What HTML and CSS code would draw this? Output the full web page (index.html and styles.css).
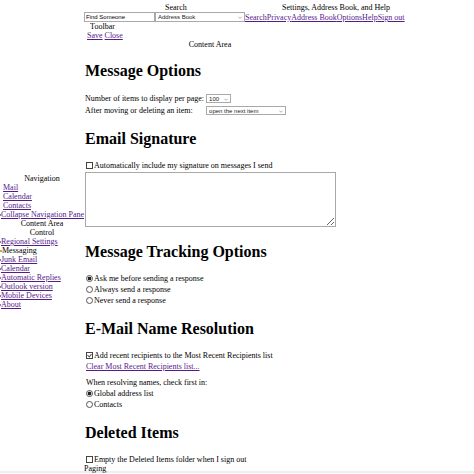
FILE: index.html
```html
<!DOCTYPE html>
<html lang="en">
<head>
    <meta charset="UTF-8">
    <title>Options</title>
    <link rel="stylesheet" href="styles.css">
</head>
<body>
    <div class="page">
        <div class="nav">
            <div class="caption">Navigation</div>
            <a href="#"><span class="ico"></span>Mail</a>
            <a href="#"><span class="ico"></span>Calendar</a>
            <a href="#"><span class="ico"></span>Contacts</a>
            <a href="#"><span class="dot"></span>Collapse Navigation Pane</a>
            <div class="caption">Content Area</div>
            <div class="caption">Control</div>
            <a href="#"><span class="dot"></span>Regional Settings</a>
            <div class="current"><span class="dot yellow"></span>Messaging</div>
            <a href="#"><span class="dot"></span>Junk Email</a>
            <a href="#"><span class="dot"></span>Calendar</a>
            <a href="#"><span class="dot"></span>Automatic Replies</a>
            <a href="#"><span class="dot"></span>Outlook version</a>
            <a href="#"><span class="dot"></span>Mobile Devices</a>
            <a href="#"><span class="dot"></span>About</a>
        </div>

        <div class="main">
            <div class="header">
                <div class="search-box">
                    <div class="search-title">Search</div>
                    <div class="search-row">
                        <input type="text" class="find" value="Find Someone">
                        <span class="sel book"><select><option>Address Book</option></select><svg viewBox="0 0 5 3"><path d="M0.5 0.5 L2.5 2.5 L4.5 0.5"/></svg></span>
                    </div>
                </div>
                <div class="help-box">
                    <div class="help-title">Settings, Address Book, and Help</div>
                    <div class="help-links"><a href="#">Search</a><a href="#">Privacy</a><a href="#">Address Book</a><a href="#">Options</a><a href="#">Help</a><a href="#">Sign out</a></div>
                </div>
            </div>

            <div class="toolbar">
                <div class="toolbar-title">Toolbar</div>
                <div><a href="#"><span class="ico"></span>Save</a> <a href="#">Close</a></div>
            </div>

            <div class="content-title">Content Area</div>

            <h1 class="first">Message Options</h1>
            <table class="opts">
                <tr>
                    <td>Number of items to display per page:</td>
                    <td><span class="sel small"><select><option>100</option></select><svg viewBox="0 0 5 3"><path d="M0.5 0.5 L2.5 2.5 L4.5 0.5"/></svg></span></td>
                </tr>
                <tr>
                    <td>After moving or deleting an item:</td>
                    <td><span class="sel wide"><select><option>open the next item</option></select><svg viewBox="0 0 5 3"><path d="M0.5 0.5 L2.5 2.5 L4.5 0.5"/></svg></span></td>
                </tr>
            </table>

            <h1>Email Signature</h1>
            <div class="line"><input type="checkbox" class="chk">Automatically include my signature on messages I send</div>
            <textarea class="sig"></textarea>

            <h1 class="tracking">Message Tracking Options</h1>
            <div class="line"><input type="radio" name="track" class="rad" checked>Ask me before sending a response</div>
            <div class="line"><input type="radio" name="track" class="rad">Always send a response</div>
            <div class="line"><input type="radio" name="track" class="rad">Never send a response</div>

            <h1>E-Mail Name Resolution</h1>
            <div class="line"><input type="checkbox" class="chk" checked>Add recent recipients to the Most Recent Recipients list</div>
            <div class="line"><a href="#">Clear Most Recent Recipients list...</a></div>
            <div class="line resolve">When resolving names, check first in:</div>
            <div class="line"><input type="radio" name="res" class="rad" checked>Global address list</div>
            <div class="line"><input type="radio" name="res" class="rad">Contacts</div>

            <h1>Deleted Items</h1>
            <div class="line"><input type="checkbox" class="chk">Empty the Deleted Items folder when I sign out</div>
        </div>
    </div>
    <div class="paging">Paging</div>
</body>
</html>
```

FILE: styles.css
```css
body{
  margin: 0;
  font-family: "Liberation Serif", "Times New Roman", serif;
  font-size: 8px;
  color: #000;
}
a{
  color: #551a8b;
}
.page{
  display: flex;
}

/* left navigation */
.nav{
  width: 84px;
  flex: none;
  padding-top: 174px;
  display: flex;
  flex-direction: column;
  line-height: 9px;
}
.nav a, .nav .current{
  white-space: nowrap;
}
.caption{
  text-align: center;
}
.ico{
  display: inline-block;
  width: 3px;
}
.dot{
  display: inline-block;
  width: 1px;
  height: 2px;
  background: #8a7ab8;
  vertical-align: middle;
}
.dot.yellow{
  background: #c9a640;
  width: 2px;
}

/* main column */
.main{
  width: 320px;
  flex: none;
}
.header{
  display: flex;
}
.search-box{
  width: 161px;
}
.search-title{
  padding-left: 81px;
  height: 11px;
  line-height: 11px;
  padding-top: 2px;
}
.search-row{
  display: flex;
  height: 10px;
  margin-top: -1px;
}
.find{
  width: 71px;
  height: 10px;
  box-sizing: border-box;
  margin: 0;
  padding: 0 1px;
  border: 1px solid #a9a9a9;
  font-family: "Liberation Sans", Arial, sans-serif;
  font-size: 6px;
}
.help-box{
  width: 159px;
}
.help-title{
  padding-left: 37px;
  height: 11px;
  line-height: 11px;
  padding-top: 2px;
}
.help-links{
  line-height: 9px;
  white-space: nowrap;
}

/* selects with a small chevron */
.sel{
  position: relative;
  display: inline-block;
  height: 10px;
  vertical-align: middle;
}
.sel select{
  appearance: none;
  display: block;
  width: 100%;
  height: 10px;
  box-sizing: border-box;
  margin: 0;
  padding: 0 0 0 2px;
  border: 1px solid #a9a9a9;
  border-radius: 0;
  font-family: "Liberation Sans", Arial, sans-serif;
  font-size: 6px;
  line-height: 8px;
  color: #222;
  background: #fff;
}
.sel svg{
  position: absolute;
  right: 3px;
  top: 4px;
  width: 4px;
  height: 3px;
  fill: none;
  stroke: #777;
  stroke-width: 0.7;
  pointer-events: none;
}
.book{
  width: 90px;
}
.small{
  width: 25px;
  height: 9px;
}
.small select{
  height: 9px;
}
.wide{
  width: 80px;
  height: 9px;
}
.wide select{
  height: 9px;
}

.toolbar{
  line-height: 9px;
}
.toolbar-title{
  width: 37px;
  text-align: center;
}
.content-title{
  text-align: center;
  width: 252px;
  line-height: 9px;
}

h1{
  font-size: 16px;
  line-height: 18px;
  margin: 13.5px 0 12.5px 1px;
}
h1.first{
  margin-top: 12.5px;
}
.opts{
  border-spacing: 0;
}
.opts td{
  padding: 1px 1px;
  height: 10px;
}
.line{
  line-height: 11px;
  white-space: nowrap;
  padding-left: 2px;
}
.chk, .rad{
  appearance: none;
  width: 7px;
  height: 7px;
  box-sizing: border-box;
  margin: 0 1px 0 0;
  vertical-align: -1px;
  border: 1px solid #444;
  background: #fff;
}
.chk{
  border-radius: 0;
  position: relative;
}
.chk:checked::after{
  content: "";
  position: absolute;
  left: 1px;
  top: 0px;
  width: 2px;
  height: 3px;
  border: solid #555;
  border-width: 0 1px 1px 0;
  transform: rotate(40deg);
}
.rad{
  border-radius: 50%;
  border-color: #555;
}
.rad:checked{
  background: radial-gradient(circle, #222 0, #222 1.6px, #fff 2.2px);
}
.sig{
  display: block;
  width: 251px;
  height: 55px;
  box-sizing: border-box;
  margin: 0.5px 0 0 1px;
  border: 1px solid #a9a9a9;
  resize: vertical;
}
.tracking{
  margin-top: 16px;
}
.resolve{
  margin-top: 5px;
}
.paging{
  line-height: 8px;
  padding-left: 84px;
  background: linear-gradient(#fff 0, #fff 6px, #eee 6px);
}
```
